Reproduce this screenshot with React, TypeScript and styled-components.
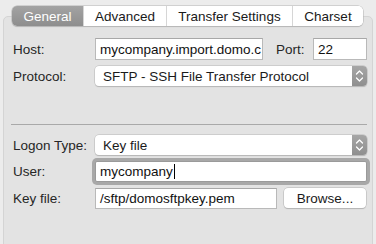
import React from 'react';
import styled, { createGlobalStyle } from 'styled-components';

const GlobalStyle = createGlobalStyle`
	html, body {
		margin: 0;
		padding: 0;
		background: #ececec;
		font-family: 'Liberation Sans', Arial, sans-serif;
		font-size: 13.5px;
		color: #222;
	}
	#root {
		width: 376px;
		height: 244px;
		overflow: hidden;
	}
`;

const tabs = [
	{ label: 'General', width: 71 },
	{ label: 'Advanced', width: 83 },
	{ label: 'Transfer Settings', width: 126 },
	{ label: 'Charset', width: 71 },
];

export default function App() {
	return (
		<Page>
			<GlobalStyle />
			<TabBar>
				{tabs.map((tab, i) => (
					<Tab key={tab.label} $width={tab.width} $active={i === 0}>
						{tab.label}
					</Tab>
				))}
			</TabBar>
			<Panel>
				<Row $height={22}>
					<Label>Host:</Label>
					<Field $width={168}>mycompany.import.domo.c</Field>
					<PortLabel>Port:</PortLabel>
					<Field $width={54}>22</Field>
				</Row>
				<Row $height={20} $top={6}>
					<Label>Protocol:</Label>
					<Select>
						<SelectText>SFTP - SSH File Transfer Protocol</SelectText>
						<Stepper />
					</Select>
				</Row>
				<Separator />
				<Row $height={20} $top={10}>
					<Label>Logon Type:</Label>
					<Select>
						<SelectText>Key file</SelectText>
						<Stepper />
					</Select>
				</Row>
				<Row $height={21} $top={6}>
					<Label>User:</Label>
					<Field $width={272} $focused>
						mycompany
						<Caret />
					</Field>
				</Row>
				<Row $height={21} $top={6}>
					<Label>Key file:</Label>
					<Field $width={182}>/sftp/domosftpkey.pem</Field>
					<Button>Browse...</Button>
				</Row>
			</Panel>
		</Page>
	);
}

function Stepper() {
	return (
		<StepperBox>
			<svg width="9" height="14" viewBox="0 0 9 14">
				<path
					d="M1.5 5 L4.5 2 L7.5 5 M1.5 9 L4.5 12 L7.5 9"
					fill="none"
					stroke="#fff"
					strokeWidth="1.3"
					strokeLinecap="round"
					strokeLinejoin="round"
				/>
			</svg>
		</StepperBox>
	);
}

const Page = styled.div`
	padding-top: 6px;
`;

const TabBar = styled.div`
	position: relative;
	z-index: 1;
	display: flex;
	margin-left: 12px;
	width: max-content;
	height: 20px;
	border-radius: 5px;
	background: #fff;
	box-shadow: 0 0 0 0.5px #b4b4b4, 0 1px 1px rgba(0, 0, 0, 0.18);
	overflow: hidden;
`;

const Tab = styled.div<{ $width: number; $active?: boolean }>`
	width: ${(p) => p.$width}px;
	display: flex;
	align-items: center;
	justify-content: center;
	box-sizing: border-box;
	border-left: 1px solid #d6d6d6;
	color: ${(p) => (p.$active ? '#fff' : '#1a1a1a')};
	background: ${(p) =>
		p.$active ? 'linear-gradient(#a3a3a3, #8e8e8e)' : '#fff'};
	&:first-child {
		border-left: none;
	}
`;

const Panel = styled.div`
	margin: -10px 0 0 3px;
	width: 370px;
	height: 240px;
	box-sizing: border-box;
	padding: 21px 0 0 9px;
	background: #e3e3e3;
	border: 1px solid #d4d4d4;
	border-radius: 5px;
`;

const Row = styled.div<{ $height: number; $top?: number }>`
	display: flex;
	align-items: center;
	height: ${(p) => p.$height}px;
	margin-top: ${(p) => p.$top || 0}px;
`;

const Label = styled.div`
	width: 82px;
	flex-shrink: 0;
	color: #262626;
`;

const PortLabel = styled.div`
	margin: 0 11px 0 13px;
	width: 26px;
	color: #262626;
`;

const Field = styled.div<{ $width: number; $focused?: boolean }>`
	width: ${(p) => p.$width}px;
	height: 100%;
	box-sizing: border-box;
	display: flex;
	align-items: center;
	padding-left: 4px;
	background: #fff;
	border: 1px solid #b9b9b9;
	border-top-color: #a8a8a8;
	white-space: nowrap;
	overflow: hidden;
	color: #111;
	${(p) =>
		p.$focused &&
		`
		box-shadow: 0 0 0 3px #a8a8a8;
		border-radius: 2px;
		border-color: #9a9a9a;
	`}
`;

const Caret = styled.span`
	display: inline-block;
	width: 1px;
	height: 15px;
	background: #000;
	margin-left: 1px;
`;

const Select = styled.div`
	width: 272px;
	height: 100%;
	box-sizing: border-box;
	display: flex;
	align-items: center;
	background: #fff;
	border-radius: 4px;
	box-shadow: 0 0 0 0.5px #b8b8b8, 0 1px 1px rgba(0, 0, 0, 0.2);
	overflow: hidden;
`;

const SelectText = styled.div`
	flex: 1;
	padding-left: 8px;
	color: #1a1a1a;
`;

const StepperBox = styled.div`
	width: 15px;
	height: 100%;
	display: flex;
	align-items: center;
	justify-content: center;
	background: linear-gradient(#a6a6a6, #8f8f8f);
`;

const Separator = styled.div`
	margin: 38px 0 0 -2px;
	width: 356px;
	height: 1px;
	background: #a9a9a9;
`;

const Button = styled.div`
	margin-left: 7px;
	width: 82px;
	height: 20px;
	box-sizing: border-box;
	display: flex;
	align-items: center;
	justify-content: center;
	background: #fff;
	border-radius: 4px;
	box-shadow: 0 0 0 0.5px #b4b4b4, 0 1px 1px rgba(0, 0, 0, 0.2);
	color: #1a1a1a;
	align-self: flex-start;
`;
